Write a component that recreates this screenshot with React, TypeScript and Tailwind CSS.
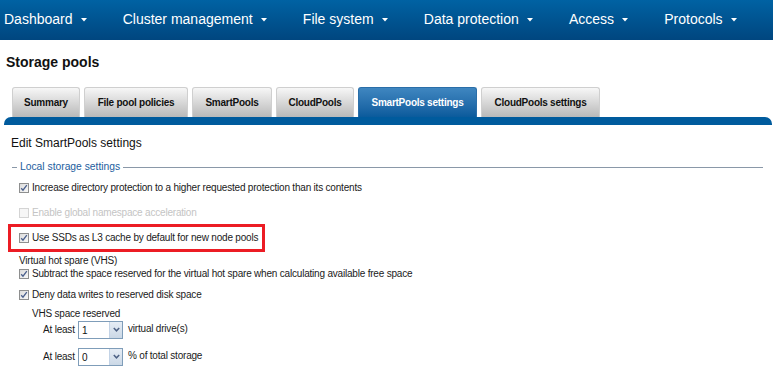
import React from "react";

const navItems = ["Dashboard", "Cluster management", "File system", "Data protection", "Access", "Protocols"];

const tabs = [
  { label: "Summary", w: "w-[68px]" },
  { label: "File pool policies", w: "w-[104px]" },
  { label: "SmartPools", w: "w-[80px]" },
  { label: "CloudPools", w: "w-[78px]" },
  { label: "SmartPools settings", w: "w-[119px]", active: true },
  { label: "CloudPools settings", w: "w-[119px]" },
];

function Caret() {
  return (
    <svg width="6" height="4" viewBox="0 0 6 4" className="ml-[8px] mt-[1px]">
      <path d="M0 0h6L3 3.5z" fill="#ffffff" />
    </svg>
  );
}

function Check({ checked = true, disabled = false }: { checked?: boolean; disabled?: boolean }) {
  return (
    <span
      className={
        "flex h-[10px] w-[10px] shrink-0 items-center justify-center border " +
        (disabled
          ? "border-[#d4d4d4] bg-[#f6f6f6]"
          : "border-[#8e8f8f] bg-gradient-to-br from-[#dcdcdc] to-[#f8f8f8]")
      }
    >
      {checked && !disabled && (
        <svg width="8" height="8" viewBox="0 0 8 8">
          <path d="M1.2 4.2 3 6.2 6.8 1.2" fill="none" stroke="#4a5f8c" strokeWidth="1.3" />
        </svg>
      )}
    </span>
  );
}

function CheckRow({ label, disabled = false }: { label: string; disabled?: boolean }) {
  return (
    <div className="flex items-center pl-[19px]">
      <Check disabled={disabled} />
      <span className={"ml-[3px] " + (disabled ? "text-[#c4c4c4]" : "text-[#1a1a1a]")}>{label}</span>
    </div>
  );
}

function Select({ value }: { value: string }) {
  return (
    <span className="flex h-[18px] w-[45px] items-center border border-[#7f9db9] bg-white">
      <span className="flex-1 pl-[3px] pt-[2px] text-[#111]">{value}</span>
      <span className="flex h-full w-[13px] items-center justify-center border-l border-[#c3d3e6] bg-gradient-to-b from-[#e6edf5] to-[#cbd8e6]">
        <svg width="7" height="5" viewBox="0 0 7 5">
          <path d="M0.8 1 3.5 3.8 6.2 1" fill="none" stroke="#4d6185" strokeWidth="1.5" />
        </svg>
      </span>
    </span>
  );
}

export default function App() {
  return (
    <div className="h-[376px] w-[773px] overflow-hidden bg-white font-['Liberation_Sans',Arial,sans-serif]">
      {/* top navigation */}
      <nav className="flex h-[40px] items-center gap-[36.2px] bg-gradient-to-b from-[#0062a3] to-[#00467f] pb-[2px] pl-[4px]">
        {navItems.map((n) => (
          <div key={n} className="flex items-center text-[14px] text-white">
            <span>{n}</span>
            <Caret />
          </div>
        ))}
      </nav>

      <h1 className="mt-[14px] pl-[6px] text-[14px] font-bold leading-[16px] text-[#111]">Storage pools</h1>

      {/* tabs */}
      <div className="mt-[17px] flex gap-[4px] pl-[12px]">
        {tabs.map((t) => (
          <div
            key={t.label}
            className={
              t.w +
              " flex h-[30px] items-center justify-center rounded-t-[3px] border border-b-0 text-[10px] font-bold tracking-[-0.25px] " +
              (t.active
                ? "border-[#2a6ea8] bg-gradient-to-b from-[#3f86c0] to-[#0a5b9c] text-white"
                : "border-[#cfcfcf] bg-gradient-to-b from-[#f7f7f7] to-[#b9b9b9] text-[#111]")
            }
          >
            {t.label}
          </div>
        ))}
      </div>
      <div className="ml-[4px] h-[8px] w-[768px] rounded-t-[7px] bg-[#005b9d]" />

      <div className="mt-[11px] pl-[11px] text-[12px] leading-[14px] text-[#111]">Edit SmartPools settings</div>

      {/* fieldset legend */}
      <div className="mt-[10px] flex h-[14px] items-center">
        <span className="ml-[12px] h-px w-[5px] bg-[#8a98a8]" />
        <span className="px-[3px] text-[10.3px] text-[#1d5d9e]">Local storage settings</span>
        <span className="mr-[10px] h-[1px] flex-1 bg-[#8a98a8]" />
      </div>

      <div className="text-[10px] tracking-[-0.2px]">
        <div className="mt-[1px] flex flex-col">
          <div className="flex h-[25px] items-center">
            <CheckRow label="Increase directory protection to a higher requested protection than its contents" />
          </div>
          <div className="flex h-[25px] items-center">
            <CheckRow label="Enable global namespace acceleration" disabled />
          </div>
          <div className="relative flex h-[25px] items-center">
            <CheckRow label="Use SSDs as L3 cache by default for new node pools" />
            <span className="pointer-events-none absolute left-[8px] top-[-1.5px] h-[28px] w-[257px] border-[3px] border-[#ec1c24]" />
          </div>
        </div>

        <div className="mt-[4.5px] pl-[19px] leading-[12px] text-[#1a1a1a]">Virtual hot spare (VHS)</div>
        <div className="flex h-[14px] items-center">
          <CheckRow label="Subtract the space reserved for the virtual hot spare when calculating available free space" />
        </div>
        <div className="mt-[7px] flex h-[14px] items-center">
          <CheckRow label="Deny data writes to reserved disk space" />
        </div>

        <div className="mt-[6px] pl-[32px] leading-[12px] text-[#1a1a1a]">VHS space reserved</div>
        <div className="mt-[1px] flex h-[18px] items-center pl-[43px] text-[#1a1a1a]">
          <span className="w-[35px]">At least</span>
          <Select value="1" />
          <span className="ml-[5px] -mt-[3px]">virtual drive(s)</span>
        </div>
        <div className="mt-[9px] flex h-[18px] items-center pl-[43px] text-[#1a1a1a]">
          <span className="w-[35px]">At least</span>
          <Select value="0" />
          <span className="ml-[5px] -mt-[3px]">% of total storage</span>
        </div>
      </div>
    </div>
  );
}
